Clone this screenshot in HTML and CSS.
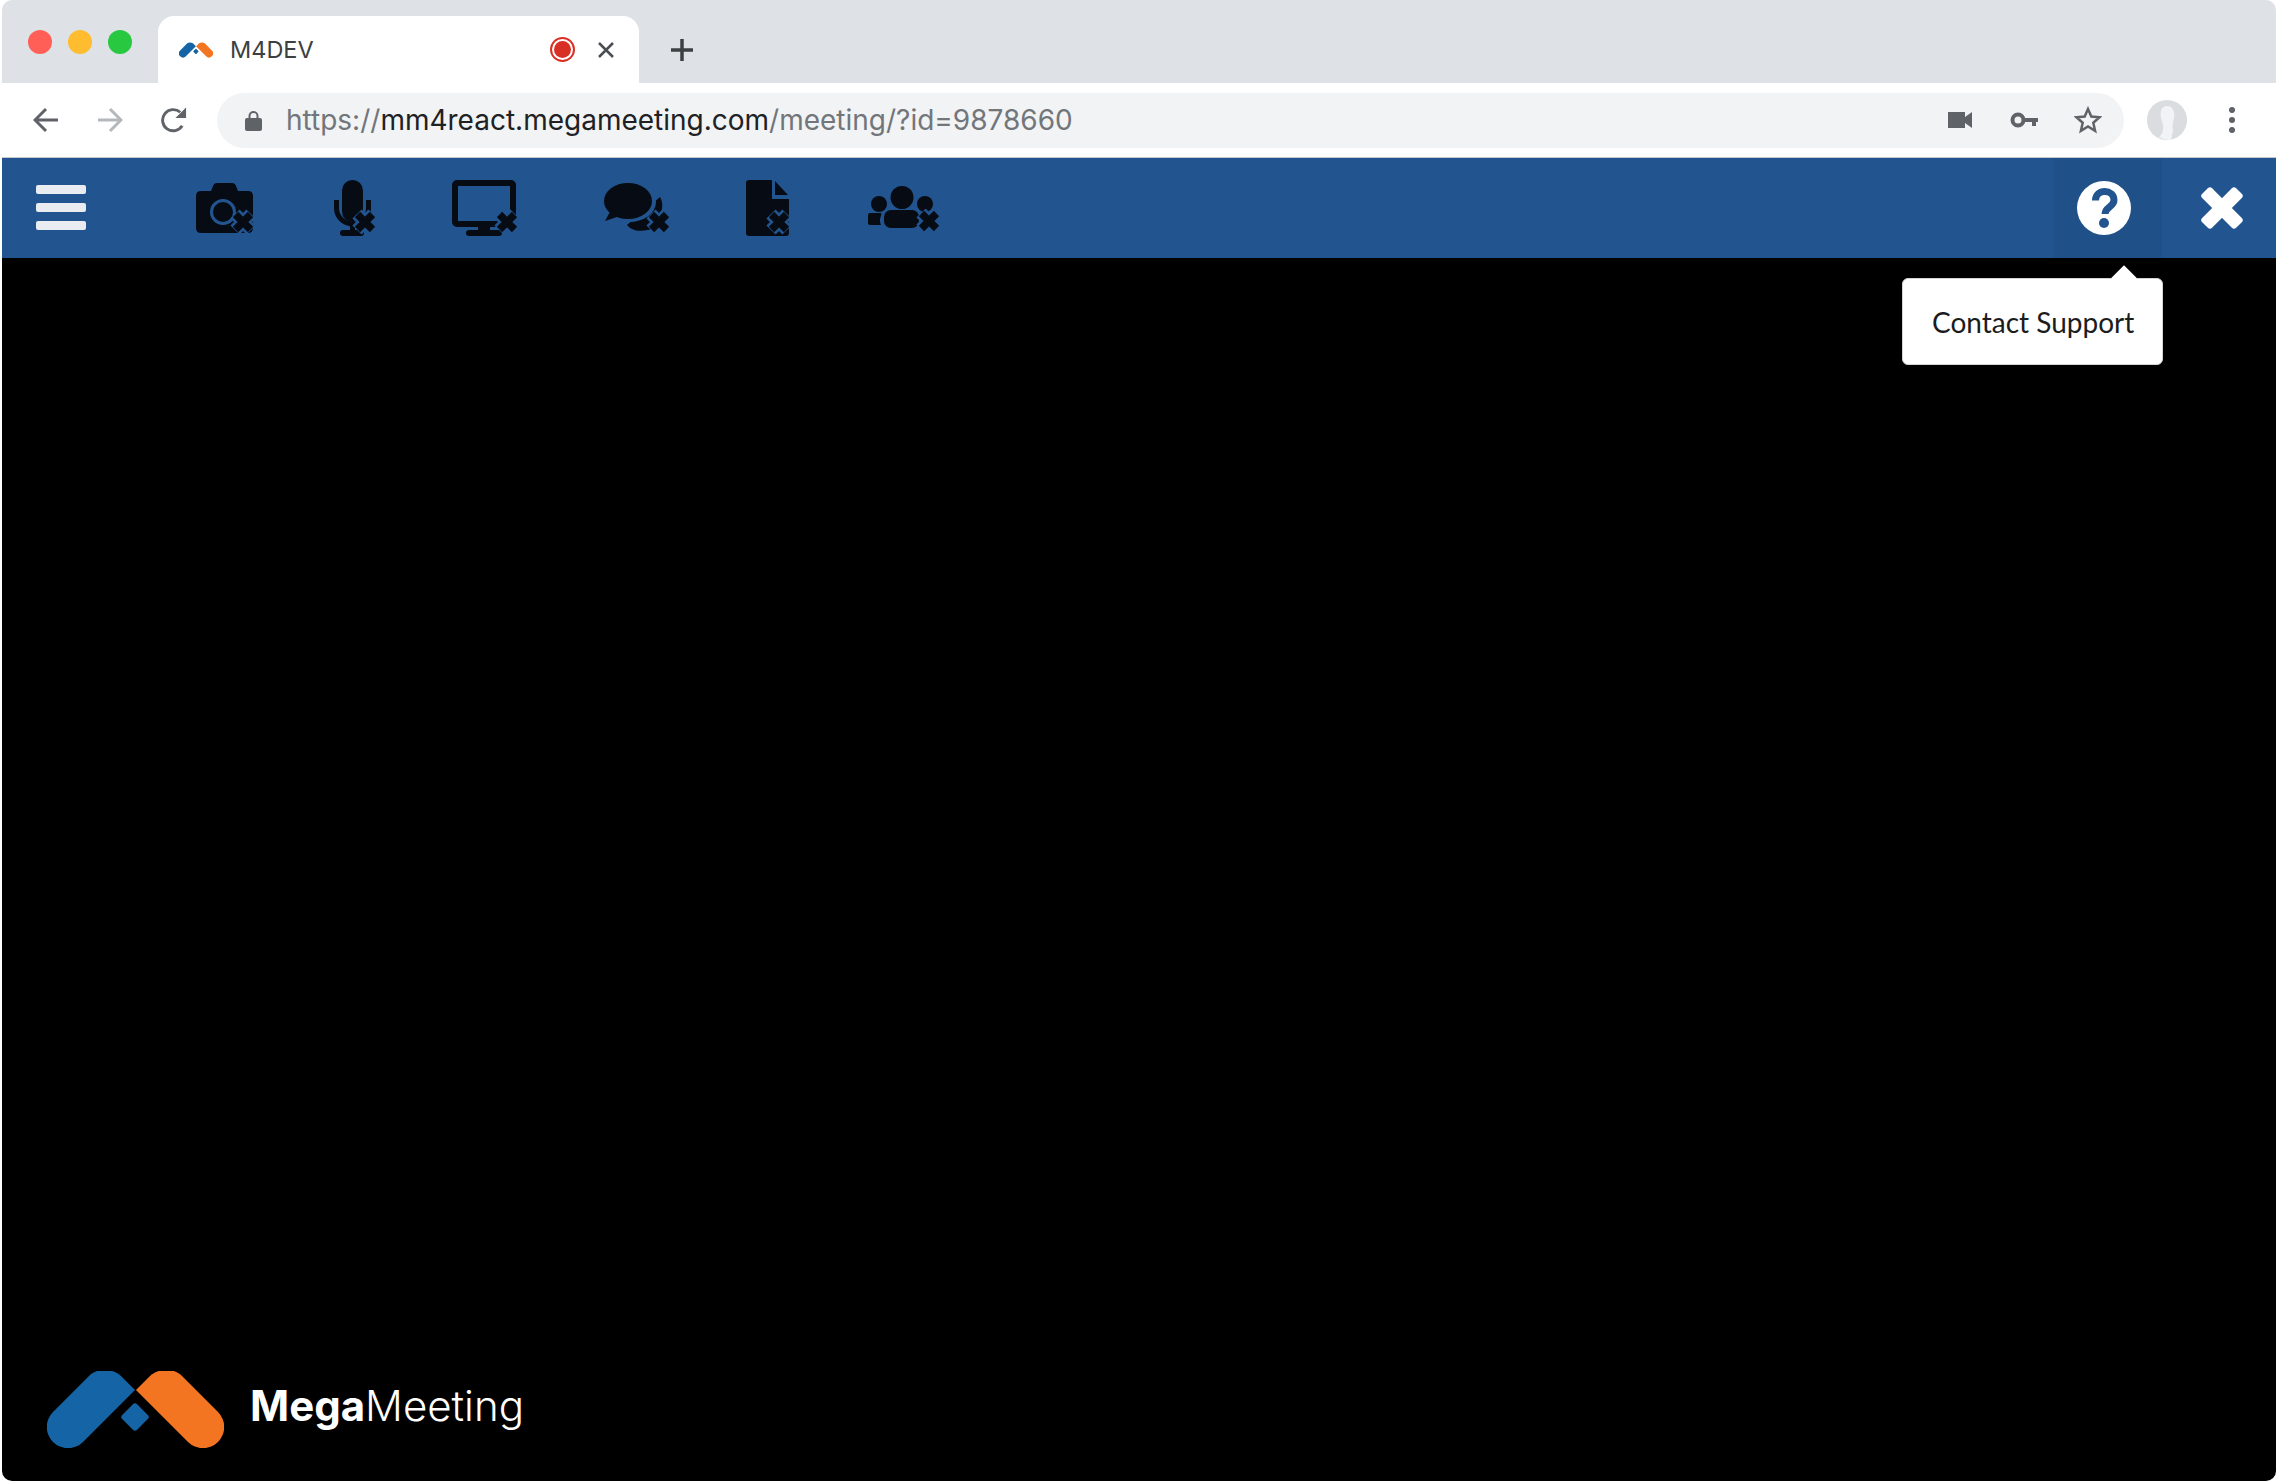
FILE: index.html
```html
<!DOCTYPE html>
<html lang="en">
<head>
    <meta charset="UTF-8">
    <title>M4DEV</title>
    <link rel="stylesheet" href="styles.css">
</head>
<body>

  <!-- shared shapes -->
  <svg class="defs">
    <symbol id="logo-mark" viewBox="7 6 177 77">
      <path fill="#1565a6" d="M95 25L43 77A21 21 0 0 1 13 47L50 10C58 3 72 3 81 11Z"/>
      <path fill="#f47521" d="M96 25L148 77A21 21 0 0 0 178 47L141 10C133 3 119 3 110 11Z"/>
      <rect fill="#1565a6" x="84.500" y="41.500" width="21" height="21" rx="3" transform="rotate(45 95 52)"/>
    </symbol>
    <symbol id="x-badge" viewBox="-16 -16 32 32">
      <path d="M-8 -8L8 8M8 -8L-8 8" stroke="#22558f" stroke-width="13" fill="none"/>
      <path d="M-7.500 -7.500L7.500 7.500M7.500 -7.500L-7.500 7.500" stroke="#060b14" stroke-width="7.500" fill="none"/>
    </symbol>
  </svg>

  <div class="window">

    <!-- Tabs -->
    <div class="tabstrip">
      <div class="lights">
        <span class="light red"></span>
        <span class="light yellow"></span>
        <span class="light green"></span>
      </div>
      <div class="tab">
        <svg class="favicon"><use href="#logo-mark"/></svg>
        <span class="tab-title">M4DEV</span>
        <span class="rec"></span>
        <svg class="tab-close" viewBox="0 0 18 18"><path d="M2 2L16 16M16 2L2 16" stroke="#4a4d51" stroke-width="2.500"/></svg>
      </div>
      <svg class="new-tab" viewBox="0 0 24 24"><path d="M12 1V23M1 12H23" stroke="#3c4043" stroke-width="3.500"/></svg>
    </div>

    <!-- Address bar -->
    <div class="toolbar">
      <svg class="nav back" viewBox="0 0 26 26"><path d="M25 13H3M13 2L2 13L13 24" stroke="#5f6368" stroke-width="3" fill="none"/></svg>
      <svg class="nav forward" viewBox="0 0 26 26"><path d="M1 13H23M13 2L24 13L13 24" stroke="#b4b7bb" stroke-width="3" fill="none"/></svg>
      <svg class="nav reload" viewBox="0 0 27 26"><path d="M22 19A11 11 0 1 1 20 5" stroke="#5f6368" stroke-width="3" fill="none"/><path d="M26 0V11H15Z" fill="#5f6368"/></svg>
      <div class="omnibox">
        <svg class="lock" viewBox="0 0 17 21"><path d="M4.500 9V6a4 4 0 0 1 8 0V9" stroke="#5f6368" stroke-width="2" fill="none"/><rect y="8" width="17" height="13" rx="2" fill="#5f6368"/></svg>
        <span class="url"><span class="url-dim">https://</span>mm4react.megameeting.com<span class="url-dim">/meeting/?id=9878660</span></span>
        <svg class="omni-icon video" viewBox="0 0 24 16"><path d="M0 0H17V5L24 0V16L17 11V16H0Z" fill="#5f6368"/></svg>
        <svg class="omni-icon key" viewBox="0 0 28 16"><circle cx="8" cy="8" r="5.500" stroke="#5f6368" stroke-width="4" fill="none"/><path d="M14 6H28V10H26V14H22V10H14Z" fill="#5f6368"/></svg>
        <svg class="omni-icon star" viewBox="0 0 28 28"><path d="M14 3L17.300 10.600L25.500 11.300L19.300 16.700L21.100 24.800L14 20.500L6.900 24.800L8.700 16.700L2.500 11.300L10.700 10.600Z" stroke="#5f6368" stroke-width="2.500" fill="none"/></svg>
      </div>
      <svg class="avatar" viewBox="0 0 40 40">
        <circle cx="20" cy="20" r="20" fill="#dadce0"/>
        <path d="M20 6C14 6 13 12 14 18C15 23 17 25 16 30C15 34 13 36 12 37A20 20 0 0 0 24 40L26 30C25 26 26 23 27 18C28 12 26 6 20 6Z" fill="#f1f3f4"/>
      </svg>
      <div class="dots"><span></span><span></span><span></span></div>
    </div>

    <!-- Meeting toolbar -->
    <div class="meeting-bar">
      <div class="hamburger"><span></span><span></span><span></span></div>

      <svg class="tool tool-camera" viewBox="0 0 57 50">
        <path d="M5 8H15L17 3Q18 0 21 0H36Q39 0 40 3L42 8H52Q57 8 57 13V45Q57 50 52 50H5Q0 50 0 45V13Q0 8 5 8Z" fill="#060b14"/>
        <circle cx="27" cy="29" r="11.500" stroke="#22558f" stroke-width="3" fill="none"/>
        <use href="#x-badge" x="31" y="23" width="32" height="32"/>
      </svg>

      <svg class="tool tool-mic" viewBox="0 0 41 56">
        <rect x="8" y="0" width="21" height="42" rx="10.500" fill="#060b14"/>
        <path d="M2.500 20V28A16 16 0 0 0 34.500 28V20" stroke="#060b14" stroke-width="5" fill="none"/>
        <path d="M18.500 44V51" stroke="#060b14" stroke-width="5"/>
        <rect x="6" y="50" width="24" height="6" rx="3" fill="#060b14"/>
        <use href="#x-badge" x="15" y="26" width="32" height="32"/>
      </svg>

      <svg class="tool tool-screen" viewBox="0 0 64 56">
        <rect x="3" y="3" width="58" height="41" rx="2" stroke="#060b14" stroke-width="6" fill="none"/>
        <rect x="26" y="44" width="12" height="7" fill="#060b14"/>
        <rect x="14" y="50" width="36" height="6" rx="3" fill="#060b14"/>
        <use href="#x-badge" x="39" y="26" width="32" height="32"/>
      </svg>

      <svg class="tool tool-chat" viewBox="0 0 65 50">
        <path d="M57 14C60 19 60 26 57 31C60 38 58 44 45 47C35 49 28 47 24 42Z" fill="#060b14"/>
        <ellipse cx="26" cy="19" rx="27" ry="20" fill="#22558f"/>
        <ellipse cx="25" cy="18" rx="24" ry="18" fill="#060b14"/>
        <path d="M8 27L2 38L17 33Z" fill="#060b14"/>
        <use href="#x-badge" x="40" y="23" width="32" height="32"/>
      </svg>

      <svg class="tool tool-file" viewBox="0 0 43 56">
        <path d="M3 0H26V19H43V53Q43 56 40 56H3Q0 56 0 53V3Q0 0 3 0Z" fill="#060b14"/>
        <path d="M29 1L42 15H29Z" fill="#060b14"/>
        <use href="#x-badge" x="17" y="26" width="32" height="32"/>
      </svg>

      <svg class="tool tool-users" viewBox="0 0 71 44">
        <circle cx="34" cy="11.500" r="11.500" fill="#060b14"/>
        <rect x="16" y="24" width="35" height="18" rx="7" fill="#060b14"/>
        <circle cx="11" cy="18" r="8" fill="#060b14"/>
        <path d="M2 27H13C14 27 13 30 12 33C12 35 12 37 13 39H2Q0 39 0 37V29Q0 27 2 27Z" fill="#060b14"/>
        <circle cx="57" cy="18" r="8" fill="#060b14"/>
        <use href="#x-badge" x="45" y="19" width="32" height="32"/>
      </svg>

      <div class="help-cell">
        <svg class="help-icon" viewBox="-27 -27 54 54">
          <circle r="27" fill="#fff"/>
          <path d="M-8.500 -7.500C-8.500 -20 10 -19 10 -8C10 -1 1 -1 1 6" stroke="#22558f" stroke-width="7" fill="none"/>
          <circle cx="0" cy="15" r="5" fill="#22558f"/>
        </svg>
        <div class="tooltip">Contact Support</div>
      </div>
      <div class="close-cell">
        <svg class="close-icon" viewBox="-22 -22 44 44">
          <rect x="-24" y="-7" width="48" height="14" rx="3" fill="#fff" transform="rotate(45)"/>
          <rect x="-24" y="-7" width="48" height="14" rx="3" fill="#fff" transform="rotate(-45)"/>
        </svg>
      </div>
    </div>

    <!-- Video stage -->
    <div class="stage">
      <div class="brand">
        <svg class="brand-mark"><use href="#logo-mark"/></svg>
        <span class="brand-name"><b>Mega</b>Meeting</span>
      </div>
    </div>

  </div>

</body>
</html>
```

FILE: styles.css
```css
/* page */
html, body {
    margin: 0;
    background: #fff;
}

.defs {
    display: none;
}

.window {
    margin-left: 2px;
    height: 1481px;
    display: flex;
    flex-direction: column;
    font-family: Inter, "Liberation Sans", sans-serif;
}

/* tab strip */
.tabstrip {
    height: 83px;
    flex: none;
    display: flex;
    align-items: flex-end;
    background: #dee1e6;
    border-radius: 10px 10px 0 0;
}

.lights {
    display: flex;
    gap: 16px;
    padding-left: 26px;
    width: 130px;
    height: 83px;
    align-items: center;
}

.light {
    width: 24px;
    height: 24px;
    border-radius: 50%;
}

.red { background: #ff5f57; }
.yellow { background: #febc2e; }
.green { background: #28c840; }

.tab {
    height: 67px;
    width: 481px;
    display: flex;
    align-items: center;
    background: #fff;
    border-radius: 16px 16px 0 0;
    box-sizing: border-box;
    padding-left: 21px;
}

.favicon {
    width: 34px;
    height: 16px;
    flex: none;
}

.tab-title {
    margin-left: 17px;
    width: 324px;
    font-size: 23.500px;
    color: #3c4043;
}

.rec {
    flex: none;
    width: 17px;
    height: 17px;
    background: #d93025;
    border-radius: 50%;
    box-shadow: 0 0 0 2px #fff, 0 0 0 4px #d93025;
}

.tab-close {
    flex: none;
    width: 18px;
    height: 18px;
    margin-left: 26px;
}

.new-tab {
    width: 24px;
    height: 24px;
    margin: 0 0 21px 31px;
}

/* address bar */
.toolbar {
    height: 75px;
    flex: none;
    display: flex;
    align-items: center;
    background: #fff;
    border-bottom: 1px solid #c4c7cb;
    box-sizing: border-box;
}

.nav {
    width: 26px;
    height: 26px;
}

.back { margin-left: 31px; }
.forward { margin-left: 38px; }
.reload { margin-left: 38px; }

.omnibox {
    width: 1907px;
    height: 55px;
    margin-left: 30px;
    display: flex;
    align-items: center;
    background: #f1f3f4;
    border-radius: 28px;
}

.lock {
    width: 17px;
    height: 21px;
    margin-left: 28px;
}

.url {
    margin-left: 24px;
    font-size: 28px;
    color: #202124;
    white-space: nowrap;
}

.url-dim {
    color: #72767b;
}

.omni-icon {
    flex: none;
}

.video {
    width: 24px;
    height: 16px;
    margin-left: auto;
}

.key {
    width: 28px;
    height: 16px;
    margin-left: 38px;
}

.star {
    width: 28px;
    height: 28px;
    margin: 0 22px 0 36px;
}

.avatar {
    width: 40px;
    height: 40px;
    margin-left: 23px;
}

.dots {
    display: flex;
    flex-direction: column;
    gap: 4px;
    margin-left: 42px;
}

.dots span {
    width: 6px;
    height: 6px;
    background: #5f6368;
    border-radius: 50%;
}

/* meeting bar */
.meeting-bar {
    height: 100px;
    flex: none;
    display: flex;
    align-items: center;
    background: #22558f;
}

.hamburger {
    display: flex;
    flex-direction: column;
    gap: 9px;
    margin: 0 0 1px 34px;
}

.hamburger span {
    width: 50px;
    height: 9px;
    background: #e9ecf1;
    border-radius: 2px;
}

.tool {
    flex: none;
    overflow: visible;
}

.tool-camera { width: 57px; height: 50px; margin-left: 110px; }
.tool-mic { width: 41px; height: 56px; margin-left: 81px; }
.tool-screen { width: 64px; height: 56px; margin-left: 77px; }
.tool-chat { width: 65px; height: 50px; margin-left: 87px; }
.tool-file { width: 43px; height: 56px; margin-left: 78px; }
.tool-users { width: 71px; height: 44px; margin-left: 79px; }

.help-cell {
    position: relative;
    width: 109px;
    height: 100%;
    margin-left: auto;
    display: flex;
    align-items: center;
    box-sizing: border-box;
    padding-left: 24px;
    background: #1f5088;
}

.help-icon {
    width: 54px;
    height: 54px;
}

.tooltip {
    position: absolute;
    top: 120px;
    left: -151px;
    width: 261px;
    height: 87px;
    box-sizing: border-box;
    padding: 1px 0 0 29px;
    line-height: 85px;
    background: #fff;
    border: 1px solid #d4d4d5;
    border-radius: 6px;
    font-family: Lato, sans-serif;
    font-size: 28px;
    color: #1b1c1d;
    white-space: nowrap;
}

/* little arrow on top of the tooltip */
.tooltip::before {
    content: "";
    position: absolute;
    top: -10px;
    left: 212px;
    width: 18px;
    height: 18px;
    background: #fff;
    transform: rotate(45deg);
}

.close-cell {
    width: 114px;
    height: 100%;
    display: flex;
    align-items: center;
    box-sizing: border-box;
    padding-left: 38px;
}

.close-icon {
    width: 44px;
    height: 44px;
}

/* video stage */
.stage {
    flex: 1;
    display: flex;
    align-items: flex-end;
    background: #000;
    border-radius: 0 0 10px 10px;
}

.brand {
    display: flex;
    align-items: center;
    margin: 0 0 33px 45px;
}

.brand-mark {
    width: 177px;
    height: 77px;
}

.brand-name {
    margin: 0 0 8px 26px;
    font-size: 42px;
    font-weight: 300;
    color: #fff;
}

.brand-name b {
    font-weight: 700;
}
```
